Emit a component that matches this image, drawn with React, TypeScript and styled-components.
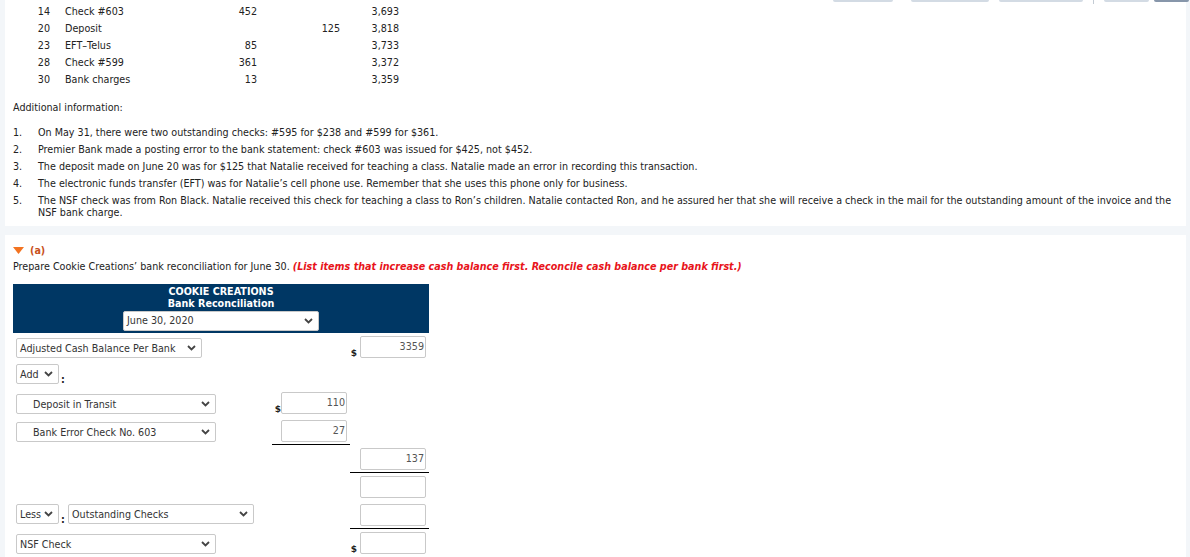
import React from "react";
import styled, { createGlobalStyle } from "styled-components";

const Global = createGlobalStyle`
  html, body { margin: 0; padding: 0; background: #f3f6f9; }
  body {
    font-family: "DejaVu Sans", Verdana, sans-serif;
    font-size: 9.6px;
    color: #222;
  }
  * { box-sizing: border-box; }
`;

const Page = styled.div`
  position: relative;
  padding: 0 4px 0 5px;
  display: flex;
  flex-direction: column;
  gap: 9px;
  min-height: 557px;
`;

const Toolbar = styled.div`
  position: absolute;
  top: 0;
  right: 0;
  left: 833px;
  height: 3px;
  display: flex;
  align-items: flex-start;
`;

const ToolBtn = styled.div<{ $w: number; $ml: number; $dark?: boolean }>`
  width: ${(p) => p.$w}px;
  margin-left: ${(p) => p.$ml}px;
  height: 2px;
  border-radius: 0 0 3px 3px;
  background: ${(p) => (p.$dark ? "#8796aa" : "#d3dbe4")};
`;

const ToolSep = styled.div`
  width: 1px;
  height: 4px;
  margin-left: 10px;
  background: #c3cbd4;
`;

const Card = styled.section<{ $pad: string }>`
  background: #fff;
  padding: ${(p) => p.$pad};
`;

const LedgerRow = styled.div`
  display: grid;
  grid-template-columns: 45px 155px 52px 83px 59px;
  height: 17px;
  line-height: 17px;
`;

const Cell = styled.div<{ $align?: string; $pl?: number }>`
  text-align: ${(p) => p.$align || "left"};
  padding-left: ${(p) => p.$pl || 0}px;
  white-space: nowrap;
`;

const InfoTitle = styled.div`
  margin: 14px 0 0 8px;
  line-height: 12px;
`;

const InfoList = styled.ol`
  list-style: none;
  margin: 13px 0 0 0;
  padding: 0 9px 0 8px;
`;

const InfoItem = styled.li`
  display: grid;
  grid-template-columns: 25px 1fr;
  line-height: 11.5px;
  margin-bottom: 5.5px;
  &:last-child { margin-bottom: 0; }
`;

const PartHead = styled.div`
  display: flex;
  align-items: center;
  gap: 6px;
  height: 12px;
  color: #c8511c;
  font-weight: bold;
`;

const Prompt = styled.div`
  margin-top: 5px;
  line-height: 12px;
  white-space: nowrap;
`;

const Hint = styled.span`
  color: #e8141b;
  font-weight: bold;
  font-style: italic;
`;

const Recon = styled.div`
  margin-top: 11px;
  width: 416px;
`;

const Banner = styled.div`
  background: #003764;
  height: 49px;
  padding-top: 2px;
  display: flex;
  flex-direction: column;
  align-items: center;
  color: #fff;
  font-weight: bold;
  line-height: 11.5px;
`;

const Select = styled.div<{ $w: number; $indent?: number }>`
  width: ${(p) => p.$w}px;
  height: 20px;
  flex: none;
  background: #fff;
  border: 1px solid #c9c9c9;
  border-radius: 2px;
  display: flex;
  align-items: center;
  justify-content: space-between;
  padding: 0 5px 0 ${(p) => p.$indent ?? 3}px;
  color: #333;
  font-weight: normal;
  white-space: nowrap;
`;

const DateSelect = styled(Select)`
  margin-top: 2px;
`;

const RecRow = styled.div`
  display: grid;
  grid-template-columns: 259px 78px 79px;
`;

const LabelCell = styled.div<{ $top?: boolean }>`
  padding: 3px 0 3px 3px;
  display: flex;
  align-items: ${(p) => (p.$top ? "flex-start" : "flex-end")};
`;

const AmtCell = styled.div<{ $line?: boolean; $gap?: number }>`
  padding: 3px 3px 2px 0;
  border-bottom: 1px solid ${(p) => (p.$line ? "#000" : "transparent")};
  display: flex;
  justify-content: flex-end;
  align-items: flex-end;
  gap: ${(p) => p.$gap ?? 0}px;
  min-height: 28px;
`;

const Dollar = styled.span`
  font-size: 9px;
  font-weight: bold;
  line-height: 9px;
  color: #222;
`;

const Colon = styled.span`
  font-weight: bold;
  line-height: 9px;
  margin: 11px 0 0 2px;
  width: 7px;
`;

const Field = styled.input`
  width: 66px;
  height: 22px;
  border: 1px solid #c9c9c9;
  border-radius: 2px;
  background: #fff;
  font-family: "DejaVu Sans", Verdana, sans-serif;
  font-size: 9.6px;
  color: #555;
  text-align: right;
  padding: 0 1px 2px 2px;
  outline: none;
`;

const Chevron = () => (
  <svg width="9" height="6" viewBox="0 0 9 6">
    <polyline points="1,1 4.5,4.5 8,1" fill="none" stroke="#444" strokeWidth="1.8" />
  </svg>
);

const Triangle = () => (
  <svg width="11" height="7" viewBox="0 0 11 7">
    <polygon points="0,0 11,0 5.5,7" fill="#f37321" />
  </svg>
);

const Drop = ({ w, text, indent }: { w: number; text: string; indent?: number }) => (
  <Select $w={w} $indent={indent}>
    <span>{text}</span>
    <Chevron />
  </Select>
);

const ledger = [
  ["14", "Check #603", "452", "", "3,693"],
  ["20", "Deposit", "", "125", "3,818"],
  ["23", "EFT\u2013Telus", "85", "", "3,733"],
  ["28", "Check #599", "361", "", "3,372"],
  ["30", "Bank charges", "13", "", "3,359"],
];

const info = [
  "On May 31, there were two outstanding checks: #595 for $238 and #599 for $361.",
  "Premier Bank made a posting error to the bank statement: check #603 was issued for $425, not $452.",
  "The deposit made on June 20 was for $125 that Natalie received for teaching a class. Natalie made an error in recording this transaction.",
  "The electronic funds transfer (EFT) was for Natalie\u2019s cell phone use. Remember that she uses this phone only for business.",
  "The NSF check was from Ron Black. Natalie received this check for teaching a class to Ron\u2019s children. Natalie contacted Ron, and he assured her that she will receive a check in the mail for the outstanding amount of the invoice and the NSF bank charge.",
];

export default function App() {
  return (
    <>
      <Global />
      <Page>
        <Toolbar>
          <ToolBtn $w={60} $ml={0} />
          <ToolBtn $w={78} $ml={18} />
          <ToolBtn $w={84} $ml={10} />
          <ToolSep />
          <ToolBtn $w={45} $ml={10} />
          <ToolBtn $w={35} $ml={5} $dark />
        </Toolbar>

        <Card $pad="3px 0 8px 0">
          {ledger.map((r) => (
            <LedgerRow key={r[0]}>
              <Cell $align="right">{r[0]}</Cell>
              <Cell $pl={15}>{r[1]}</Cell>
              <Cell $align="right">{r[2]}</Cell>
              <Cell $align="right">{r[3]}</Cell>
              <Cell $align="right">{r[4]}</Cell>
            </LedgerRow>
          ))}
          <InfoTitle>Additional information:</InfoTitle>
          <InfoList>
            {info.map((t, i) => (
              <InfoItem key={i}>
                <span>{i + 1}.</span>
                <span>{t}</span>
              </InfoItem>
            ))}
          </InfoList>
        </Card>

        <Card $pad="9px 8px 0 8px">
          <PartHead>
            <Triangle />
            <span>(a)</span>
          </PartHead>
          <Prompt>
            Prepare Cookie Creations’ bank reconciliation for June 30.{" "}
            <Hint>(List items that increase cash balance first. Reconcile cash balance per bank first.)</Hint>
          </Prompt>

          <Recon>
            <Banner>
              <div>COOKIE CREATIONS</div>
              <div>Bank Reconciliation</div>
              <DateSelect $w={196} $indent={3}>
                <span>June 30, 2020</span>
                <Chevron />
              </DateSelect>
            </Banner>

            <RecRow>
              <LabelCell>
                <Drop w={186} text="Adjusted Cash Balance Per Bank" />
              </LabelCell>
              <AmtCell />
              <AmtCell $gap={3}>
                <Dollar>$</Dollar>
                <Field readOnly value="3359" />
              </AmtCell>
            </RecRow>

            <RecRow>
              <LabelCell $top>
                <Drop w={43} text="Add" />
                <Colon>:</Colon>
              </LabelCell>
              <AmtCell />
              <AmtCell />
            </RecRow>

            <RecRow>
              <LabelCell>
                <Drop w={200} text="Deposit in Transit" indent={16} />
              </LabelCell>
              <AmtCell $gap={0}>
                <Dollar>$</Dollar>
                <Field readOnly value="110" />
              </AmtCell>
              <AmtCell />
            </RecRow>

            <RecRow>
              <LabelCell>
                <Drop w={200} text="Bank Error Check No. 603" indent={16} />
              </LabelCell>
              <AmtCell $line>
                <Field readOnly value="27" />
              </AmtCell>
              <AmtCell />
            </RecRow>

            <RecRow>
              <LabelCell />
              <AmtCell />
              <AmtCell $line>
                <Field readOnly value="137" />
              </AmtCell>
            </RecRow>

            <RecRow>
              <LabelCell />
              <AmtCell />
              <AmtCell>
                <Field readOnly value="" />
              </AmtCell>
            </RecRow>

            <RecRow>
              <LabelCell $top>
                <Drop w={43} text="Less" />
                <Colon>:</Colon>
                <Drop w={186} text="Outstanding Checks" />
              </LabelCell>
              <AmtCell />
              <AmtCell $line>
                <Field readOnly value="" />
              </AmtCell>
            </RecRow>

            <RecRow>
              <LabelCell>
                <Drop w={200} text="NSF Check" />
              </LabelCell>
              <AmtCell />
              <AmtCell $gap={3}>
                <Dollar>$</Dollar>
                <Field readOnly value="" />
              </AmtCell>
            </RecRow>
          </Recon>
        </Card>
      </Page>
    </>
  );
}
